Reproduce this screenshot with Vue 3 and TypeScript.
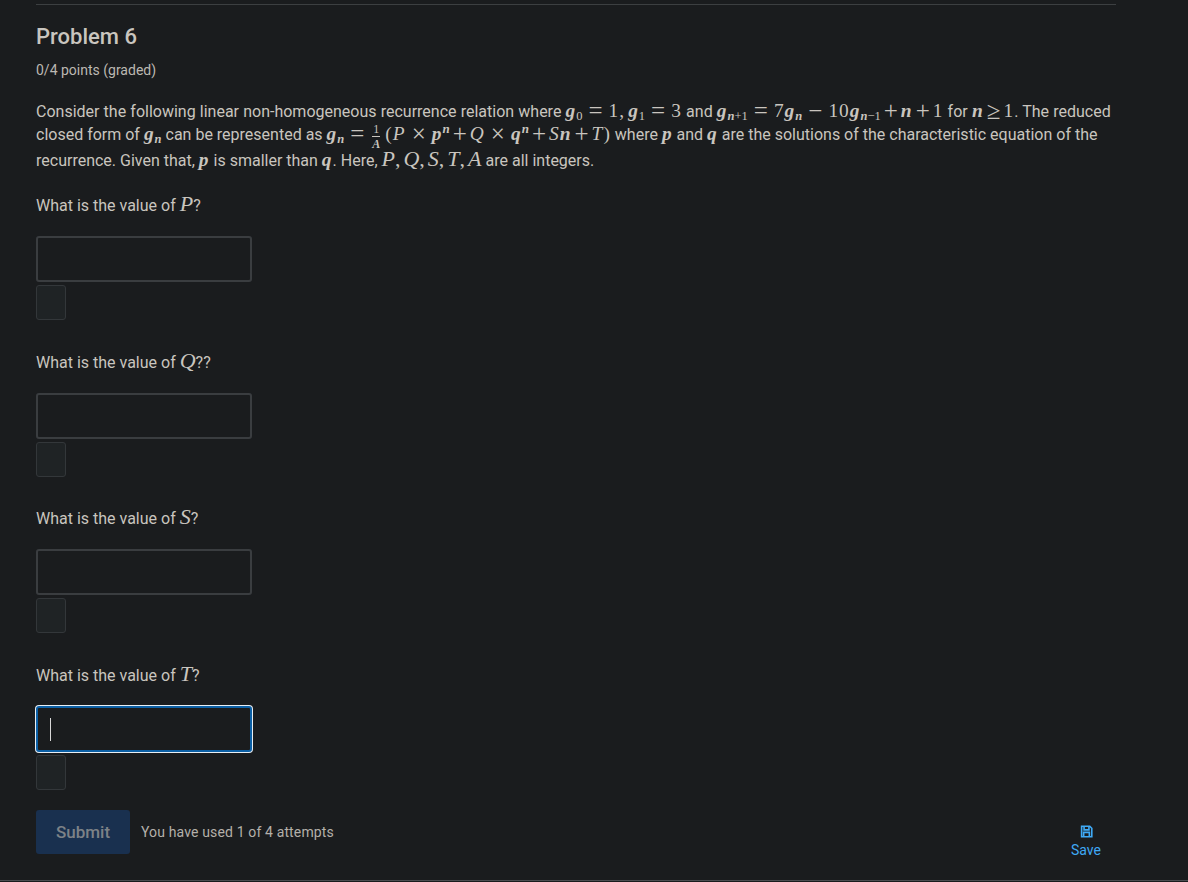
<script setup lang="ts">
interface Question {
  symbol: string
  suffix: string
  focused?: boolean
}

const questions: Question[] = [
  { symbol: 'P', suffix: '?' },
  { symbol: 'Q', suffix: '??' },
  { symbol: 'S', suffix: '?' },
  { symbol: 'T', suffix: '?', focused: true }
]
</script>

<template>
  <div class="page">
    <hr class="rule">
    <h3 class="title">Problem 6</h3>
    <div class="points">0/4 points (graded)</div>

    <p class="statement">
      <span class="line first">Consider the following linear non-homogeneous recurrence relation where
        <span class="m"><i class="v">g</i><sub>0</sub><b>=</b>1,<i class="v gap">g</i><sub>1</sub><b>=</b>3</span> and
        <span class="m"><i class="v">g</i><sub><i class="v">n</i>+1</sub><b>=</b>7<i class="v">g</i><sub><i class="v">n</i></sub><b>−</b>10<i class="v">g</i><sub><i class="v">n</i>−1</sub><b class="thin">+</b><i class="v">n</i><b class="thin">+</b>1</span> for
        <span class="m"><i class="v">n</i><b class="thin">≥</b>1</span>. The reduced</span>
      <span class="line second">closed form of <span class="m"><i class="v">g</i><sub><i class="v">n</i></sub></span> can be represented as
        <span class="m"><i class="v">g</i><sub><i class="v">n</i></sub><b>=</b><span class="frac"><span>1</span><span class="den"><i class="v">A</i></span></span>(<i>P</i><b>×</b><i class="v">p</i><sup><i class="v">n</i></sup><b class="thin">+</b><i>Q</i><b>×</b><i class="v">q</i><sup><i class="v">n</i></sup><b class="thin">+</b><i>S</i><i class="v">n</i><b class="thin">+</b><i>T</i>)</span> where
        <span class="m"><i class="v">p</i></span> and <span class="m"><i class="v">q</i></span> are the solutions of the characteristic equation of the</span>
      <span class="line tall">recurrence. Given that, <span class="m"><i class="v">p</i></span> is smaller than <span class="m"><i class="v">q</i></span>. Here,
        <span class="m big"><i>P</i>,<i class="gap">Q</i>,<i class="gap">S</i>,<i class="gap">T</i>,<i class="gap">A</i></span> are all integers.</span>
    </p>

    <div v-for="q in questions" :key="q.symbol" class="question">
      <label class="label">What is the value of <span class="m big"><i>{{ q.symbol }}</i></span>{{ q.suffix }}</label>
      <div class="field" :class="{ focused: q.focused }">
        <input type="text" class="answer">
        <span v-if="q.focused" class="caret"></span>
      </div>
      <div class="status"></div>
    </div>

    <div class="actions">
      <button type="button" class="submit" disabled>Submit</button>
      <span class="attempts">You have used 1 of 4 attempts</span>
      <a class="save">
        <svg width="13" height="13" viewBox="0 0 16 16" fill="none" stroke="#3fa9f5" stroke-width="2">
          <path d="M2 1.500h10l2.500 2.500v10.500h-12.500z" />
          <path d="M5 2v4h6V2" />
          <path d="M4.500 14v-5h7v5" />
        </svg>
        <span>Save</span>
      </a>
    </div>
  </div>
</template>

<style scoped>
.page {
  height: 881px;
  box-sizing: border-box;
  padding: 4px 72px 0 36px;
  border-bottom: 1px solid #4a4d50;
  background: #1a1c1e;
  color: #c9c5bf;
  font-family: Roboto, "Open Sans", sans-serif;
  font-size: 16px;
}

.rule {
  height: 1px;
  margin: 0;
  border: 0;
  background: #3c3f41;
}

.title {
  margin: 17px 0 0;
  font-size: 22px;
  line-height: 29px;
  font-weight: 500;
}

.points {
  margin-top: 10px;
  height: 18px;
  font-size: 14px;
  line-height: 18px;
  color: #bcb8b2;
}

.statement {
  margin: 22px 0 0;
}

.line {
  display: block;
  height: 22px;
  line-height: 22px;
  white-space: nowrap;
}

.line.first {
  word-spacing: 0.200px;
}

.line.second {
  margin-top: 1px;
}

.line.tall {
  height: 27px;
  margin-top: 1px;
  line-height: 27px;
}

.m {
  font-family: "Liberation Serif", serif;
  font-size: 19.400px;
  line-height: 1;
  letter-spacing: 1px;
}

.m i.v {
  font-weight: 700;
}

.m b {
  margin: 0 6px;
  font-size: 25px;
  font-weight: 400;
  line-height: 0;
  letter-spacing: 0;
  vertical-align: -1.500px;
}

.m b.thin {
  margin: 0 3px;
}

.m .gap {
  margin-left: 3px;
}

.m sub,
.m sup {
  font-size: 13px;
  line-height: 0;
  letter-spacing: 0;
}

.m sub {
  font-size: 12.500px;
  vertical-align: -3px;
}

.m.big {
  font-size: 22px;
  letter-spacing: 0;
}

.frac {
  display: inline-flex;
  flex-direction: column;
  justify-content: center;
  align-items: center;
  height: 24px;
  margin-right: 3px;
  padding: 0 2px;
  font-size: 12px;
  line-height: 14px;
  letter-spacing: 0;
  vertical-align: middle;
}

.frac .den {
  border-top: 1px solid #c9c5bf;
}

.question {
  height: 156.500px;
}

.statement + .question {
  margin-top: 17px;
}

.label {
  display: block;
  height: 45px;
  line-height: 29px;
}

.field {
  position: relative;
  width: 216px;
  height: 46px;
}

.answer {
  display: block;
  width: 100%;
  height: 100%;
  box-sizing: border-box;
  border: 2px solid #3a3d40;
  border-radius: 3px;
  outline: 0;
  background: #1a1c1e;
  color: #c9c5bf;
}

.focused .answer {
  border-color: #0b5fa5;
  box-shadow: 0 0 0 1px #e8eef4;
}

.caret {
  position: absolute;
  top: 12px;
  left: 14px;
  width: 1px;
  height: 23px;
  background: #d8d8d8;
}

.status {
  width: 30px;
  height: 35px;
  margin-top: 3px;
  box-sizing: border-box;
  border: 1px solid #33373a;
  border-radius: 3px;
  background: #1f2325;
}

.actions {
  display: flex;
  align-items: center;
  height: 44px;
  margin-top: -7px;
}

.submit {
  width: 94px;
  height: 44px;
  border: 0;
  border-radius: 3px;
  background: #19304f;
  color: #7d8287;
  font-family: inherit;
  font-size: 17px;
  font-weight: 500;
}

.attempts {
  margin-left: 11px;
  font-size: 14px;
  letter-spacing: 0.140px;
  color: #b4b0aa;
}

.save {
  display: flex;
  flex-direction: column;
  align-items: center;
  gap: 3px;
  width: 60px;
  margin-top: 20px;
  margin-left: auto;
  color: #3fa9f5;
  font-size: 14px;
  line-height: 18px;
}
</style>

<style>
html, body {
  background: #1a1c1e;
}
</style>
